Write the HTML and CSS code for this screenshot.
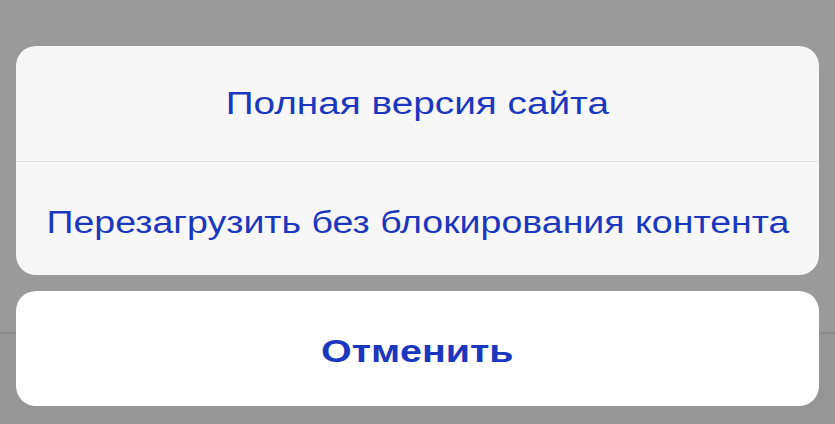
FILE: index.html
```html
<!DOCTYPE html>
<html lang="ru">
<head>
<meta charset="utf-8">
<title>Action sheet</title>
<link rel="stylesheet" href="styles.css">
</head>
<body>
<div class="sheet">
  <div class="group">
    <div class="action"><span class="label">Полная версия сайта</span></div>
    <div class="action"><span class="label narrow">Перезагрузить без блокирования контента</span></div>
  </div>
  <div class="group cancel">
    <div class="action bold"><span class="label">Отменить</span></div>
  </div>
</div>
</body>
</html>
```
FILE: styles.css
```css
html, body {
  margin: 0;
  padding: 0;
}
body {
  width: 835px;
  height: 424px;
  overflow: hidden;
  background: linear-gradient(to bottom, #9a9a9a 0, #9a9a9a 332px, #8c8c8c 332px, #8c8c8c 334px, #969696 334px, #969696 100%);
  font-family: "Liberation Sans", Arial, sans-serif;
}
.sheet {
  display: flex;
  flex-direction: column;
  gap: 16px;
  padding: 46px 16px 0 16px;
}
.group {
  background: #f7f7f7;
  border-radius: 20px;
  overflow: hidden;
  display: flex;
  flex-direction: column;
}
.group.cancel {
  background: #ffffff;
}
.action {
  height: 115px;
  display: flex;
  align-items: center;
  justify-content: center;
  color: #1b37bd;
  font-size: 31px;
  font-weight: 400;
  box-sizing: border-box;
}
.label {
  display: inline-block;
  transform: scaleX(1.25);
  white-space: nowrap;
}
.label.narrow {
  transform: scaleX(1.21);
}
.action + .action {
  border-top: 1px solid #e2e2e2;
  height: 114px;
  padding-top: 9px;
}
.bold {
  font-weight: 700;
  font-size: 32px;
  padding-top: 6px;
}
.bold .label {
  transform: scaleX(1.23);
}
```
